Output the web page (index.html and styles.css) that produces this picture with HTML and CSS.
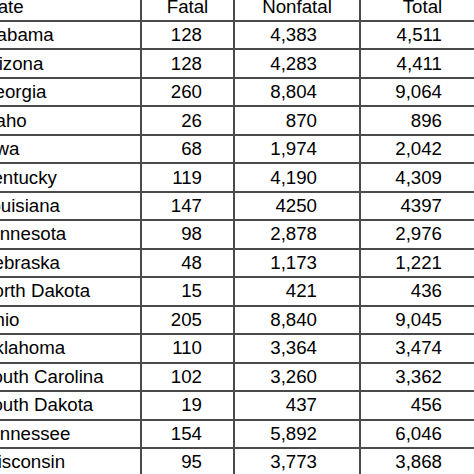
FILE: index.html
```html
<!DOCTYPE html>
<html>
<head>
<meta charset="utf-8">
<link rel="stylesheet" href="styles.css">
</head>
<body>
<table class="data">
<colgroup><col class="c1"><col class="c2"><col class="c3"><col class="c4"></colgroup>
<thead>
<tr><th class="name">State</th><th>Fatal</th><th>Nonfatal</th><th>Total</th></tr>
</thead>
<tbody>
<tr><td class="name">Alabama</td><td class="f">128</td><td>4,383</td><td>4,511</td></tr>
<tr><td class="name">Arizona</td><td class="f">128</td><td>4,283</td><td>4,411</td></tr>
<tr><td class="name">Georgia</td><td class="f">260</td><td>8,804</td><td>9,064</td></tr>
<tr><td class="name">Idaho</td><td class="f">26</td><td>870</td><td>896</td></tr>
<tr><td class="name">Iowa</td><td class="f">68</td><td>1,974</td><td>2,042</td></tr>
<tr><td class="name">Kentucky</td><td class="f">119</td><td>4,190</td><td>4,309</td></tr>
<tr><td class="name">Louisiana</td><td class="f">147</td><td>4250</td><td>4397</td></tr>
<tr><td class="name">Minnesota</td><td class="f">98</td><td>2,878</td><td>2,976</td></tr>
<tr><td class="name">Nebraska</td><td class="f">48</td><td>1,173</td><td>1,221</td></tr>
<tr><td class="name">North Dakota</td><td class="f">15</td><td>421</td><td>436</td></tr>
<tr><td class="name">Ohio</td><td class="f">205</td><td>8,840</td><td>9,045</td></tr>
<tr><td class="name">Oklahoma</td><td class="f">110</td><td>3,364</td><td>3,474</td></tr>
<tr><td class="name">South Carolina</td><td class="f">102</td><td>3,260</td><td>3,362</td></tr>
<tr><td class="name">South Dakota</td><td class="f">19</td><td>437</td><td>456</td></tr>
<tr><td class="name">Tennessee</td><td class="f">154</td><td>5,892</td><td>6,046</td></tr>
<tr><td class="name">Wisconsin</td><td class="f">95</td><td>3,773</td><td>3,868</td></tr>
</tbody>
</table>
</body>
</html>
```
FILE: styles.css
```css
html, body {
  margin: 0;
  padding: 0;
  background: #ffffff;
  overflow: hidden;
  width: 474px;
  height: 474px;
}
.data {
  border-collapse: collapse;
  table-layout: fixed;
  width: 510px;
  margin: -8.5px 0 0 -26px;
  font-family: "Liberation Sans", Arial, sans-serif;
  font-size: 18.7px;
  color: #000000;
}
.c1 { width: 166px; }
.c2 { width: 93px; }
.c3 { width: 126px; }
.c4 { width: 125px; }
.data th, .data td {
  border: 2px solid #4a4a4a;
  height: 26.47px;
  padding: 0 42px 0 0;
  text-align: right;
  font-weight: normal;
  line-height: 20px;
  vertical-align: middle;
}
.data th {
  text-align: center;
  padding: 0;
}
.data .name {
  text-align: left;
  padding: 0 0 0 4px;
}
.data td.f {
  padding-right: 31px;
}
```
